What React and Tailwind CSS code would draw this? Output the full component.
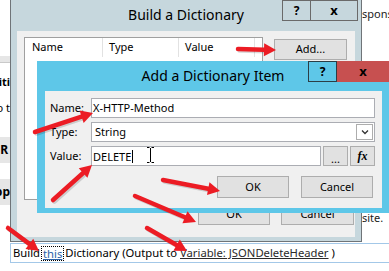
import React from "react";

function Arrow({x1, y1, x2, y2}) {
    const a = Math.atan2(y2 - y1, x2 - x1);
    const len = 12, half = 6.5;
    const bx = x2 - len * Math.cos(a), by = y2 - len * Math.sin(a);
    const px = -Math.sin(a) * half, py = Math.cos(a) * half;
    const head = `${x2},${y2} ${bx + px},${by + py} ${bx - px},${by - py}`;
    return (
        <g>
            <line x1={x1 + 1.5} y1={y1 + 1.5} x2={bx + 1.5} y2={by + 1.5} stroke="rgba(0,0,0,0.15)" strokeWidth="4.5" strokeLinecap="round"/>
            <line x1={x1} y1={y1} x2={bx} y2={by} stroke="#ec1c24" strokeWidth="4.5" strokeLinecap="round"/>
            <polygon points={head} fill="#ec1c24"/>
        </g>
    );
}

function Overlay() {
    return (
        <svg className="absolute inset-0 pointer-events-none" width="389" height="271">
            <Arrow x1={238} y1={49} x2={276} y2={50}/>
            <Arrow x1={35} y1={132} x2={93} y2={113}/>
            <Arrow x1={53} y1={200} x2={92} y2={165}/>
            <Arrow x1={163} y1={180} x2={220} y2={191}/>
            <Arrow x1={135} y1={196} x2={196} y2={222}/>
            <Arrow x1={8} y1={228} x2={39} y2={251}/>
            <Arrow x1={147} y1={228} x2={187} y2={251}/>
            {/* i-beam */}
            <path d="M147 147.5h2.5M151.5 147.5h2.5M150.5 148v14M147 162.5h2.5M151.5 162.5h2.5" stroke="#000" strokeWidth="1" fill="none"/>
        </svg>
    );
}

function WinButton({children, className = ""}) {
    return (
        <div className={"flex items-center justify-center bg-[#e1e1e1] border border-[#adadad] text-[11px] text-black " + className}>
            {children}
        </div>
    );
}

function LeftStrip() {
    return (
        <div className="w-[10px] flex flex-col overflow-hidden font-bold text-[11px] text-black">
            <div className="h-[56px]"/>
            <div className="h-[7px] bg-[#e6e6e6] border-b border-[#c9c9c9]"/>
            <div className="h-[12px]"/>
            <div className="flex justify-end whitespace-nowrap leading-[14px]">Conditi</div>
            <div className="h-[12px]"/>
            <div className="flex justify-end whitespace-nowrap leading-[14px] font-normal">Go t</div>
            <div className="h-[22px]"/>
            <div className="h-[26px] bg-[#e6e6e6] flex items-center justify-end pr-[2px] whitespace-nowrap text-[12px]">R</div>
            <div className="h-[16px]"/>
            <div className="h-[26px] bg-[#e6e6e6] flex items-center justify-end whitespace-nowrap text-[12px]">App</div>
        </div>
    );
}

function RightStrip() {
    return (
        <div className="w-[27px] flex flex-col text-[11px] text-[#222] whitespace-nowrap overflow-hidden">
            <div className="mt-[6px] leading-[15px]">sponse</div>
            <div className="mt-[189px] leading-[15px]">site.</div>
        </div>
    );
}

function BottomBar() {
    return (
        <div className="ml-[10px] h-[20px] border border-r-0 border-[#a3c8e8] flex items-center pl-[2px] text-[11.25px] text-black whitespace-nowrap">
            <span>Build</span>
            <span className="mx-[1px] border border-dotted border-black px-[1px] leading-[13px] text-[#2b62a8] underline">this</span>
            <span>Dictionary (Output to&nbsp;</span>
            <span className="underline text-[#2a2a2a]">Variable: JSONDeleteHeader</span>
            <span>&nbsp;)</span>
        </div>
    );
}

function OuterDialog() {
    return (
        <div className="absolute left-[10px] top-[-1px] w-[352px] h-[243px] border border-[#6f7478] bg-[#c6d7dd] flex flex-col">
            <div className="h-[31px] grid grid-cols-[1fr_auto_1fr]">
                <div/>
                <div className="pt-[6px] text-[14px] text-black leading-[18px]">Build a Dictionary</div>
                <div className="flex justify-end items-start pr-[3px]">
                    <div className="w-[29px] h-[21px] border border-[#6a6a6a] flex items-center justify-center font-bold text-[12px]">?</div>
                    <div className="w-[47px] h-[21px] border border-l-0 border-[#6a6a6a] flex items-center justify-center font-bold text-[13px]">x</div>
                </div>
            </div>
            <div className="flex-1 mx-[6px] mb-[4px] bg-[#f0f0f0] pt-[6px] pl-[7px] flex flex-col">
                <div className="flex">
                    <div className="w-[239px] h-[163px] bg-white border border-[#a0a0a0] flex flex-col">
                        <div className="h-[19px] flex text-[11px] text-black">
                            <div className="w-[78px] pl-[7px] flex items-center border-r border-[#e2e2e2]">Name</div>
                            <div className="w-[76px] pl-[6px] flex items-center border-r border-[#e2e2e2]">Type</div>
                            <div className="w-[76px] pl-[6px] flex items-center border-r border-[#e2e2e2]">Value</div>
                        </div>
                    </div>
                    <WinButton className="ml-[11px] mt-[2px] w-[73px] h-[21px]">Add...</WinButton>
                </div>
                <div className="flex mt-[4px] pl-[174px] gap-[11px]">
                    <WinButton className="w-[72px] h-[21px]">OK</WinButton>
                    <WinButton className="w-[73px] h-[21px]">Cancel</WinButton>
                </div>
            </div>
        </div>
    );
}

function Field({label, children}) {
    return (
        <div className="flex items-center h-[20px]">
            <div className="w-[41px] text-[11px] text-black">{label}</div>
            {children}
        </div>
    );
}

function InnerDialog() {
    return (
        <div className="absolute left-[37px] top-[61px] w-[352px] h-[152px] bg-[#5ec7e8] flex flex-col">
            <div className="h-[30px] grid grid-cols-[1fr_auto_1fr]">
                <div/>
                <div className="pt-[6px] text-[14px] text-black leading-[18px] whitespace-nowrap">Add a Dictionary Item</div>
                <div className="flex justify-end items-start">
                    <div className="w-[29px] h-[21px] border border-[#2b3e46] flex items-center justify-center font-bold text-[12px]">?</div>
                    <div className="w-[52px] h-[21px] bg-[#c75050] flex items-center justify-center font-bold text-[13px] text-black">x</div>
                </div>
            </div>
            <div className="flex-1 ml-[8px] mr-[7px] mb-[5px] bg-[#f0f0f0] pt-[7px] pl-[5px] flex flex-col gap-[4px]">
                <Field label="Name:">
                    <div className="w-[284px] h-[20px] bg-white border border-[#abadb3] flex items-center pl-[1px] text-[11px] text-black">X-HTTP-Method</div>
                </Field>
                <Field label="Type:">
                    <div className="w-[284px] h-[20px] bg-white border border-[#abadb3] flex items-center pl-[3px] pr-[1px] text-[11px] text-black">
                        <span className="flex-1">String</span>
                        <div className="w-[17px] h-[16px] border border-[#adadad] flex items-center justify-center">
                            <svg width="8" height="6" viewBox="0 0 8 6"><path d="M1 1.5l3 3 3-3" stroke="#333" strokeWidth="1.3" fill="none"/></svg>
                        </div>
                    </div>
                </Field>
                <Field label="Value:">
                    <div className="w-[230px] h-[20px] bg-white border border-[#abadb3] flex items-center pl-[1px] text-[11px] text-black">
                        <span className="border-r border-black leading-[13px] pr-[1px]">DELETE</span>
                    </div>
                    <WinButton className="ml-[2px] w-[25px] h-[20px] leading-none pt-[4px]">...</WinButton>
                    <WinButton className="ml-[2px] w-[25px] h-[20px] font-['Liberation_Serif',serif] italic font-bold text-[12px]">fx</WinButton>
                </Field>
                <div className="flex mt-[6px] pl-[167px] gap-[12px]">
                    <WinButton className="w-[72px] h-[22px] border-[#3c7fb1]">OK</WinButton>
                    <WinButton className="w-[72px] h-[22px]">Cancel</WinButton>
                </div>
            </div>
        </div>
    );
}

export default function App() {
    return (
        <div className="relative w-[389px] h-[271px] overflow-hidden bg-white font-['Noto_Sans',sans-serif]">
            <div className="flex flex-col h-full">
                <div className="flex h-[243px]">
                    <LeftStrip/>
                    <div className="flex-1"/>
                    <RightStrip/>
                </div>
                <BottomBar/>
            </div>
            <OuterDialog/>
            <InnerDialog/>
            <Overlay/>
        </div>
    );
}
